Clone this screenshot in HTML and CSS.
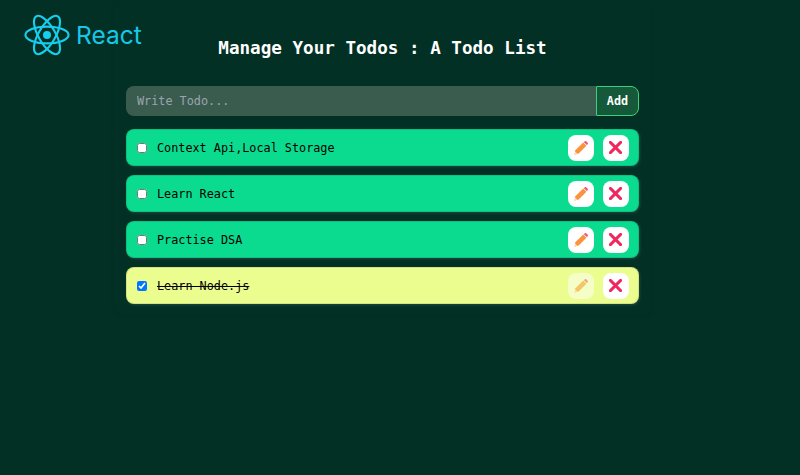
FILE: index.html
```html
<!DOCTYPE html>
<html lang="en">
<head>
    <meta charset="UTF-8">
    <meta name="viewport" content="width=device-width, initial-scale=1.0">
    <title>Todo List</title>
    <link rel="stylesheet" href="styles.css">
</head>
<body>
    <svg class="icon-defs">
        <symbol id="pencil" viewBox="0 0 14 14">
            <polygon points="0.6,13.4 1.4,9.3 9.2,1.6 12.4,4.8 4.7,12.6" fill="#fb923c"></polygon>
            <polygon points="0.6,13.4 1.2,10.6 3.4,12.8" fill="#fcd9b0"></polygon>
            <path d="M9.9 1.2l0.9-0.9c0.4-0.4 1-0.4 1.4 0l1.5 1.5c0.4 0.4 0.4 1 0 1.4l-0.9 0.9z" fill="#f2557d"></path>
        </symbol>
        <symbol id="cross" viewBox="0 0 12 12">
            <path d="M1.3 1.3L10.7 10.7M10.7 1.3L1.3 10.7" stroke="#f0275f" stroke-width="2.7" stroke-linecap="round" fill="none"></path>
        </symbol>
    </svg>

    <div class="logo">
        <svg class="logo-icon" viewBox="-12 -11 24 22" fill="none" stroke="#16cfee" stroke-width="1.1">
            <circle r="2.1" fill="#16cfee" stroke="none"></circle>
            <ellipse rx="11.3" ry="4.4"></ellipse>
            <ellipse rx="11.3" ry="4.4" transform="rotate(60)"></ellipse>
            <ellipse rx="11.3" ry="4.4" transform="rotate(120)"></ellipse>
        </svg>
        <span class="logo-text">React</span>
    </div>

    <div class="todo-container">
        <h1>Manage Your Todos : A Todo List</h1>

        <form class="todo-form">
            <input type="text" class="todo-input" placeholder="Write Todo...">
            <button type="button" class="add-btn">Add</button>
        </form>

        <div class="todo-list">
            <div class="todo-item">
                <input type="checkbox" class="todo-check">
                <span class="todo-text">Context Api,Local Storage</span>
                <button type="button" class="icon-btn edit-btn"><svg class="pencil-icon"><use href="#pencil"></use></svg></button>
                <button type="button" class="icon-btn delete-btn"><svg class="cross-icon"><use href="#cross"></use></svg></button>
            </div>
            <div class="todo-item">
                <input type="checkbox" class="todo-check">
                <span class="todo-text">Learn React</span>
                <button type="button" class="icon-btn edit-btn"><svg class="pencil-icon"><use href="#pencil"></use></svg></button>
                <button type="button" class="icon-btn delete-btn"><svg class="cross-icon"><use href="#cross"></use></svg></button>
            </div>
            <div class="todo-item">
                <input type="checkbox" class="todo-check">
                <span class="todo-text">Practise DSA</span>
                <button type="button" class="icon-btn edit-btn"><svg class="pencil-icon"><use href="#pencil"></use></svg></button>
                <button type="button" class="icon-btn delete-btn"><svg class="cross-icon"><use href="#cross"></use></svg></button>
            </div>
            <div class="todo-item done">
                <input type="checkbox" class="todo-check" checked>
                <span class="todo-text">Learn Node.js</span>
                <button type="button" class="icon-btn edit-btn"><svg class="pencil-icon"><use href="#pencil"></use></svg></button>
                <button type="button" class="icon-btn delete-btn"><svg class="cross-icon"><use href="#cross"></use></svg></button>
            </div>
        </div>
    </div>
</body>
</html>
```

FILE: styles.css
```css
* {
    box-sizing: border-box;
}
body {
    margin: 0;
    height: 475px;
    overflow: hidden;
    background: #033024;
    font-family: "DejaVu Sans Mono", monospace;
}
.icon-defs {
    display: none;
}
.logo {
    position: absolute;
    top: 14px;
    left: 24px;
    display: flex;
    align-items: center;
    gap: 6px;
}
.logo-icon {
    width: 46px;
    height: 42px;
}
.logo-text {
    color: #16c8e8;
    font-family: "Inter", sans-serif;
    font-size: 24.5px;
}
.todo-container {
    width: 537px;
    margin-left: 114px;
    padding: 37px 12px 10px;
    border-radius: 8px;
    box-shadow: 0 2px 4px rgba(0, 0, 0, 0.06);
}
h1 {
    margin: 0 0 27px;
    color: #fff;
    font-size: 17.6px;
    line-height: 22px;
    font-weight: 700;
    text-align: center;
}
.todo-form {
    display: flex;
    height: 30px;
    margin-bottom: 13px;
}
.todo-input {
    flex: 1;
    min-width: 0;
    padding: 0 11px;
    border: none;
    border-radius: 8px 0 0 8px;
    outline: none;
    background: #3a5c4f;
    color: #fff;
    font-family: inherit;
    font-size: 11.8px;
}
.todo-input::placeholder {
    color: #9ca3af;
}
.add-btn {
    width: 43px;
    padding: 0;
    border: 1.5px solid #3fcf7a;
    border-radius: 0 8px 8px 0;
    background: #15593a;
    color: #fff;
    font-family: inherit;
    font-size: 11.8px;
    font-weight: 700;
}
.todo-list {
    display: flex;
    flex-direction: column;
    gap: 9px;
}
.todo-item {
    display: flex;
    align-items: center;
    height: 37px;
    padding: 0 9px 0 10px;
    border-radius: 8px;
    border: 1px solid rgba(0, 0, 0, 0.1);
    background: #0bdb8f;
    box-shadow: 1px 1px 3px rgba(255, 255, 255, 0.12);
}
.todo-item.done {
    background: #ecfd8f;
}
.todo-check {
    width: 10px;
    height: 10px;
    margin: 0 10px 0 0;
}
.todo-text {
    flex: 1;
    color: #000;
    font-size: 11.8px;
}
.done .todo-text {
    text-decoration: line-through;
}
.icon-btn {
    display: flex;
    align-items: center;
    justify-content: center;
    width: 26px;
    height: 26px;
    margin-left: 9px;
    padding: 0 1px 0 0;
    border: none;
    border-radius: 8px;
    background: #fff;
}
.pencil-icon {
    width: 14px;
    height: 14px;
}
.cross-icon {
    width: 13px;
    height: 13px;
}
.done .edit-btn {
    opacity: 0.5;
}
```
